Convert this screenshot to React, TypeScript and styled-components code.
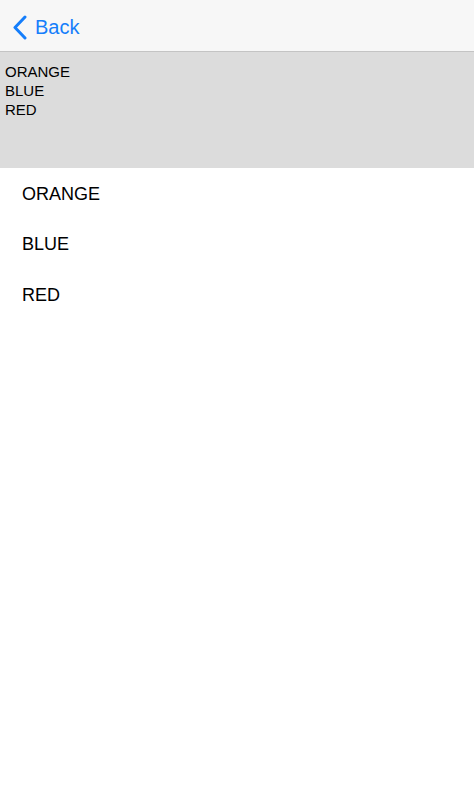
import styled, { createGlobalStyle } from 'styled-components';

const GlobalStyle = createGlobalStyle`
  html, body {
    margin: 0;
    padding: 0;
    background: #ffffff;
    font-family: 'Liberation Sans', Arial, sans-serif;
  }
`;

const Page = styled.div`
  width: 100%;
  min-height: 100vh;
  display: flex;
  flex-direction: column;
  background: #ffffff;
`;

const NavBar = styled.div`
  height: 52px;
  display: flex;
  align-items: center;
  padding: 4px 12px 0;
  box-sizing: border-box;
  background: #f7f7f7;
  border-bottom: 1px solid #c4c4c4;
`;

const BackButton = styled.button`
  display: flex;
  align-items: center;
  gap: 7px;
  padding: 0;
  border: none;
  background: none;
  color: #157efb;
  font-family: inherit;
  font-size: 20px;
  cursor: pointer;
`;

const SelectedBox = styled.div`
  height: 116px;
  box-sizing: border-box;
  padding: 10px 5px;
  background: #dcdcdc;
  font-size: 15px;
  line-height: 19px;
  color: #000;
`;

const List = styled.ul`
  list-style: none;
  margin: 0;
  padding: 1px 0 0;
`;

const Item = styled.li`
  height: 50.5px;
  display: flex;
  align-items: center;
  padding-left: 22px;
  font-size: 18px;
  color: #000;
`;

const colors = ['ORANGE', 'BLUE', 'RED'];

const App = () => {
  return (
    <Page>
      <GlobalStyle />
      <NavBar>
        <BackButton>
          <svg width="16" height="25" viewBox="0 0 16 25" fill="none">
            <path
              d="M13 2 L3 12.5 L13 23"
              stroke="#157efb"
              strokeWidth="3"
              strokeLinecap="round"
              strokeLinejoin="round"
            />
          </svg>
          Back
        </BackButton>
      </NavBar>
      <SelectedBox>
        {colors.map((c) => (
          <div key={c}>{c}</div>
        ))}
      </SelectedBox>
      <List>
        {colors.map((c) => (
          <Item key={c}>{c}</Item>
        ))}
      </List>
    </Page>
  );
};

export default App;
